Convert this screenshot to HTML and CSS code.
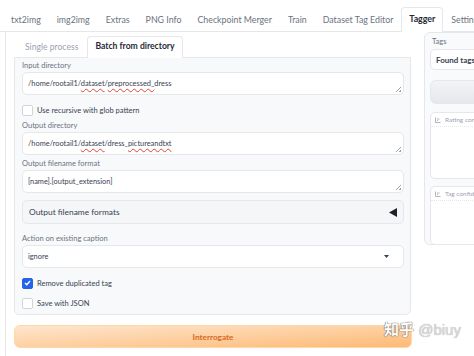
FILE: index.html
```html
<!DOCTYPE html>
<html lang="en">
<head>
  <meta charset="UTF-8">
  <meta name="viewport" content="width=device-width, initial-scale=1.0">
  <title>Tagger</title>
  <link rel="stylesheet" href="styles.css">
</head>
<body>

  <div class="app">
    <!-- Top tabs -->
    <nav class="tabs">
      <span class="tab">txt2img</span>
      <span class="tab">img2img</span>
      <span class="tab">Extras</span>
      <span class="tab">PNG Info</span>
      <span class="tab">Checkpoint Merger</span>
      <span class="tab">Train</span>
      <span class="tab">Dataset Tag Editor</span>
      <span class="tab active">Tagger</span>
      <span class="tab">Settings</span>
    </nav>

    <div class="tab-content">
      <!-- Left column -->
      <div class="col-left">
        <div class="subtabs">
          <span class="subtab">Single process</span>
          <span class="subtab active">Batch from directory</span>
        </div>

        <div class="form">
          <div class="field-label">Input directory</div>
          <div class="textbox">/home/rootail1/<span class="spell">dataset</span>/<span class="spell">preprocessed_</span>dress<span class="grip"></span></div>

          <label class="check check-first">
            <span class="box"></span>
            Use recursive with glob pattern
          </label>

          <div class="field-label label-out">Output directory</div>
          <div class="textbox">/home/rootail1/<span class="spell">dataset</span>/dress_<span class="spell">pictureandtxt</span><span class="grip"></span></div>

          <div class="field-label label-format">Output filename format</div>
          <div class="textbox">[name].[output_extension]<span class="grip"></span></div>

          <div class="accordion">
            Output filename formats
            <svg class="acc-arrow" width="8" height="9" viewBox="0 0 8 9"><polygon points="8,0 8,9 0,4.5" fill="#1f2328"/></svg>
          </div>

          <div class="field-label label-action">Action on existing caption</div>
          <div class="dropdown">
            ignore
            <svg class="dd-arrow" width="5" height="3" viewBox="0 0 5 3"><polygon points="0,0 5,0 2.5,3" fill="#374151"/></svg>
          </div>

          <label class="check check-dup">
            <span class="box checked">
              <svg width="7" height="6" viewBox="0 0 7 6"><polyline points="1,3 2.8,4.8 6,1" fill="none" stroke="#fff" stroke-width="1.4"/></svg>
            </span>
            Remove duplicated tag
          </label>
          <label class="check check-json">
            <span class="box"></span>
            Save with JSON
          </label>
        </div>

        <button class="interrogate">Interrogate</button>
      </div>

      <!-- Right column -->
      <aside class="col-right">
        <div class="field-label tags-label">Tags</div>
        <div class="found">Found tags</div>
        <div class="gray-btn"></div>
        <div class="conf rating">
          <div class="conf-label">
            <svg width="6" height="6" viewBox="0 0 6 6"><path d="M0.5 0.5v5h5M2 3.5h1M2 2h2.5" fill="none" stroke="#9ca3af" stroke-width="0.8"/></svg>
            Rating confidences
          </div>
        </div>
        <div class="conf tagconf">
          <div class="conf-label">
            <svg width="6" height="6" viewBox="0 0 6 6"><path d="M0.5 0.5v5h5M2 3.5h1M2 2h2.5" fill="none" stroke="#9ca3af" stroke-width="0.8"/></svg>
            Tag confidences
          </div>
        </div>
      </aside>
    </div>

    <div class="watermark"><span class="zh">知乎</span> @biuy</div>
  </div>

</body>
</html>
```

FILE: styles.css
```css
body {
  font-family: Lato, "Noto Sans", sans-serif;
  background-color: #fff;
  margin: 0;
  padding: 0;
  overflow: hidden;
  color: #374151;
}

.app {
  position: relative;
  width: 474px;
  height: 356px;
  overflow: hidden;
}

/* top tabs */
.tabs {
  display: flex;
  align-items: flex-end;
  height: 31px;
  padding-left: 3px;
  border-bottom: 1px solid #e5e7eb;
  white-space: nowrap;
}

.tab {
  height: 23px;
  line-height: 21px;
  padding: 0 7px;
  font-size: 8.8px;
  color: #6b7280;
  border: 1px solid transparent;
  border-bottom: none;
  margin-bottom: -1px;
}

.tab.active {
  background-color: #fff;
  color: #1f2937;
  font-weight: 700;
  border-color: #e5e7eb;
  border-radius: 4px 4px 0 0;
  height: 24px;
}

/* tab content */
.tab-content {
  display: flex;
  gap: 13px;
  margin-left: 5px;
  padding: 5px 0 0 8px;
  border-left: 1px solid #e5e7eb;
  height: 330px;
}

.col-left {
  width: 397px;
  flex-shrink: 0;
}

.subtabs {
  display: flex;
  align-items: flex-end;
  height: 20px;
  padding-left: 2px;
}

.subtab {
  height: 20px;
  line-height: 19px;
  padding: 0 8px;
  font-size: 8.6px;
  color: #9ca3af;
  border: 1px solid transparent;
  border-bottom: none;
  margin-bottom: -1px;
}

.subtab.active {
  background-color: #fff;
  color: #1f2937;
  font-weight: 700;
  border-color: #e5e7eb;
  border-radius: 4px 4px 0 0;
  height: 21px;
  padding: 0 7px;
}

.form {
  background-color: #f8f9fb;
  border: 1px solid #e5e7eb;
  border-radius: 0 0 5px 5px;
  padding: 3px 6px 3px 7px;
}

.field-label {
  font-size: 7.5px;
  line-height: 10px;
  color: #6b7280;
}

.label-out { margin-top: 3px; }
.label-format { margin-top: 4px; }
.label-action { margin-top: 10px; }

.textbox,
.dropdown {
  position: relative;
  height: 23px;
  line-height: 22px;
  box-sizing: border-box;
  padding: 0 5px;
  background-color: #fff;
  border: 1px solid #e5e7eb;
  border-radius: 5px;
  font-size: 7.4px;
  color: #374151;
  margin-top: 1px;
}

.spell {
  text-decoration: underline wavy #e0443a;
  text-decoration-thickness: 0.7px;
  text-underline-offset: 1.5px;
}

/* resize handle: overlays the textbox corner */
.grip {
  position: absolute;
  right: 2px;
  bottom: 2px;
  width: 5px;
  height: 5px;
  background: linear-gradient(135deg, transparent 45%, #9ca3af 45%, #9ca3af 58%, transparent 58%, transparent 75%, #9ca3af 75%);
}

.check {
  display: flex;
  align-items: center;
  gap: 4px;
  height: 16px;
  font-size: 7.5px;
  color: #374151;
}

.check-first { margin-top: 7px; }
.check-dup { margin-top: 7px; }
.check-json { margin-top: 4px; }

.box {
  display: flex;
  align-items: center;
  justify-content: center;
  width: 9px;
  height: 9px;
  border: 1px solid #d1d5db;
  border-radius: 2px;
  background-color: #fff;
}

.box.checked {
  background-color: #2563eb;
  border-color: #2563eb;
}

.accordion {
  display: flex;
  align-items: center;
  justify-content: space-between;
  height: 24px;
  box-sizing: border-box;
  margin-top: 7px;
  padding: 0 6px 0 6px;
  background-color: #f5f6f8;
  border: 1px solid #e5e7eb;
  border-radius: 5px;
  font-size: 8.4px;
  color: #374151;
}

.dropdown {
  display: flex;
  align-items: center;
  justify-content: space-between;
  padding-right: 14px;
}

.interrogate {
  display: block;
  width: 398px;
  height: 23px;
  margin-top: 10px;
  border: 1px solid #fed7aa;
  border-radius: 6px;
  background: linear-gradient(to bottom right, #fee6cf, #fdba74);
  color: #d7691f;
  font-family: inherit;
  font-weight: 700;
  font-size: 8.2px;
  cursor: pointer;
}

/* right column */
.col-right {
  width: 200px;
  flex-shrink: 0;
  height: 213px;
  box-sizing: border-box;
  padding: 4px 5px;
  background-color: #f9fafb;
  border: 1px solid #e5e7eb;
  border-radius: 6px;
  margin-top: -5px;
}

.tags-label {
  padding-left: 2px;
  margin-bottom: 2px;
}

.found {
  height: 21px;
  line-height: 20px;
  box-sizing: border-box;
  padding: 0 5px;
  background-color: #fff;
  border: 1px solid #e5e7eb;
  border-radius: 5px;
  font-size: 8px;
  font-weight: 700;
  color: #374151;
}

.gray-btn {
  height: 22px;
  margin-top: 10px;
  border-radius: 6px;
  border: 1px solid #e5e7eb;
  background: linear-gradient(to bottom, #f3f4f6, #e5e7eb);
}

.conf {
  margin-top: 8px;
  background-color: #fff;
  border: 1px solid #e5e7eb;
  border-radius: 5px;
}

.rating { height: 65px; }
.tagconf { height: 57px; margin-top: 7px; }

.conf-label {
  display: flex;
  align-items: center;
  gap: 4px;
  padding: 3px 4px;
  font-size: 6.5px;
  color: #9ca3af;
  border-bottom: 1px dotted #e5e7eb;
}

/* watermark over the button */
.watermark {
  position: absolute;
  left: 384px;
  top: 318px;
  font-family: "Liberation Sans", "Noto Sans CJK SC", sans-serif;
  font-size: 15px;
  color: #d9d9d9;
  text-shadow: 0 0 1px rgba(0, 0, 0, 0.35);
  white-space: nowrap;
}

.watermark .zh {
  color: #fff;
  font-weight: 700;
  text-shadow: 0 0 1px #555, 0 0 1px #555;
}
```
